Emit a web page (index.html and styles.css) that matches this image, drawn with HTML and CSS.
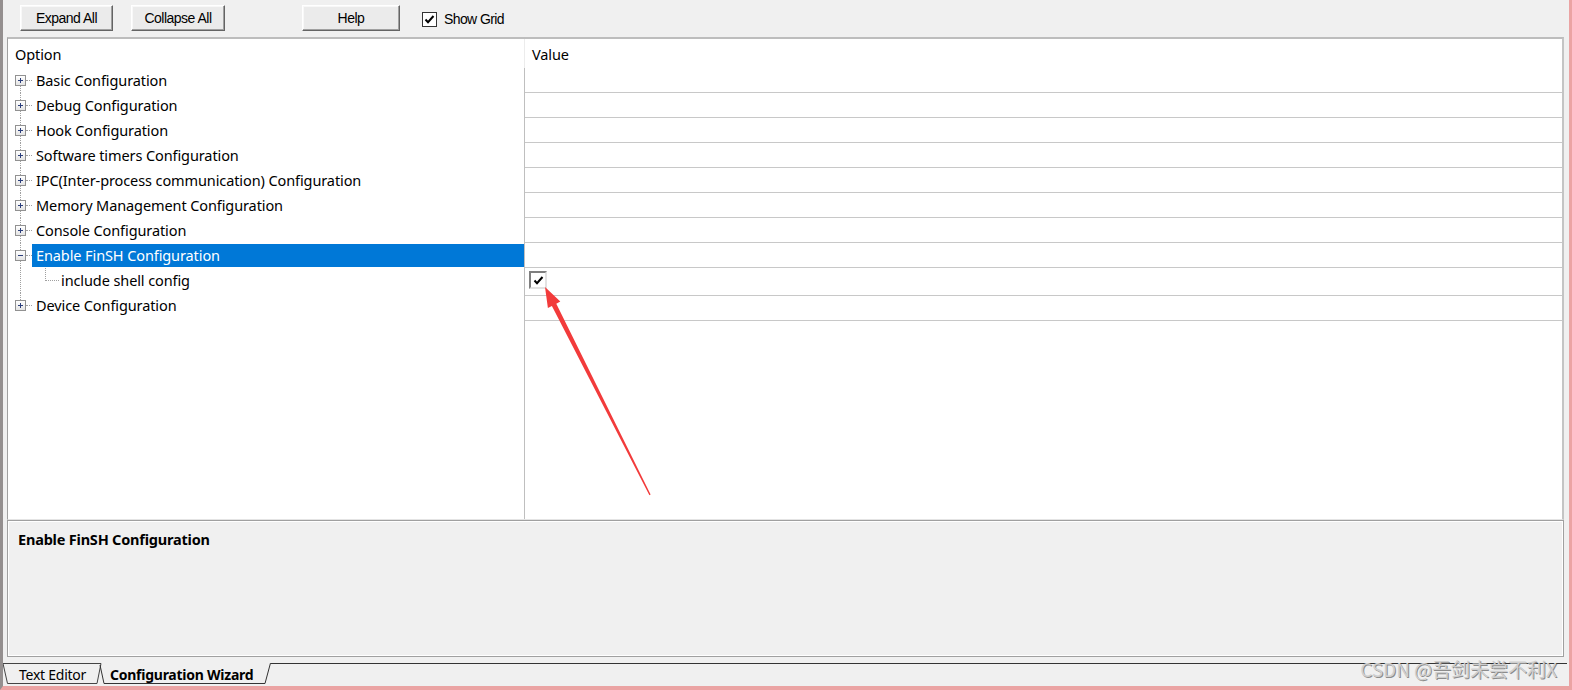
FILE: index.html
```html
<!DOCTYPE html>
<html lang="en">

<head>
    <meta charset="UTF-8">
    <meta name="viewport" content="width=device-width, initial-scale=1.0">
    <title>Configuration Wizard</title>
    <link rel="stylesheet" href="styles.css">
</head>

<body>
    <div class="window">
        <div class="toolbar">
            <button class="btn btn-expand">Expand All</button>
            <button class="btn btn-collapse">Collapse All</button>
            <button class="btn btn-help">Help</button>
            <label class="grid-toggle">
                <span class="tb-check">
                    <svg viewBox="0 0 13 13" width="13" height="13"><path d="M2.5 6.5 L5 9.2 L10.5 3" fill="none" stroke="#000" stroke-width="2"/></svg>
                </span>
                Show Grid
            </label>
        </div>

        <div class="grid">
            <div class="head head-option">Option</div>
            <div class="head head-value">Value</div>

            <ul class="tree">
                <li class="node"><span class="exp"></span><span class="dash"></span><span class="label">Basic Configuration</span></li>
                <li class="node"><span class="exp"></span><span class="dash"></span><span class="label">Debug Configuration</span></li>
                <li class="node"><span class="exp"></span><span class="dash"></span><span class="label">Hook Configuration</span></li>
                <li class="node"><span class="exp"></span><span class="dash"></span><span class="label">Software timers Configuration</span></li>
                <li class="node"><span class="exp"></span><span class="dash"></span><span class="label">IPC(Inter-process communication) Configuration</span></li>
                <li class="node"><span class="exp"></span><span class="dash"></span><span class="label">Memory Management Configuration</span></li>
                <li class="node"><span class="exp"></span><span class="dash"></span><span class="label">Console Configuration</span></li>
                <li class="node open selected"><span class="exp"></span><span class="dash"></span><span class="label">Enable FinSH Configuration</span></li>
                <li class="node child"><span class="elbow"></span><span class="label">include shell config</span></li>
                <li class="node"><span class="exp"></span><span class="dash"></span><span class="label">Device Configuration</span></li>
            </ul>

            <div class="values">
                <div class="cell"></div>
                <div class="cell"></div>
                <div class="cell"></div>
                <div class="cell"></div>
                <div class="cell"></div>
                <div class="cell"></div>
                <div class="cell"></div>
                <div class="cell"></div>
                <div class="cell">
                    <span class="vcheck">
                        <svg viewBox="0 0 13 13" width="13" height="13"><path d="M2.5 6.5 L5 9.2 L10.5 3" fill="none" stroke="#000" stroke-width="2"/></svg>
                    </span>
                </div>
                <div class="cell"></div>
            </div>
        </div>

        <div class="desc">Enable FinSH Configuration</div>

        <div class="tabs">
            <div class="tab tab-text">
                <svg width="98" height="21"><polyline points="0,0.5 4.5,20.5 94,20.5 98,0.5 0,0.5" fill="none" stroke="#444" stroke-width="1"/></svg>
                <span>Text Editor</span>
            </div>
            <div class="tab tab-wizard">
                <svg width="170" height="21"><polyline points="-1,2 3,20.5 164,20.5 169.5,0" fill="none" stroke="#333" stroke-width="1"/></svg>
                <span>Configuration Wizard</span>
            </div>
            <div class="tab-rest"></div>
        </div>

        <div class="watermark">CSDN @吾剑未尝不利X</div>

        <!-- 标注箭头 -->
        <svg class="annotation" width="1572" height="690">
            <polygon points="545,287 560.3,301.6 556.3,303.7 650.6,494.6 649.4,495.2 551.9,305.9 547.9,308" fill="#f23b3b"/>
        </svg>
    </div>
</body>

</html>
```

FILE: styles.css
```css
* {
    margin: 0;
    padding: 0;
    box-sizing: border-box;
}

body {
    background-color: #f0f0f0;
    font-family: "Noto Sans", "Open Sans", sans-serif;
    color: #000;
}

.window {
    position: relative;
    width: 1572px;
    height: 690px;
    border-left: 3px solid #948f8f;
    border-right: 3px solid #eba3a3;
    border-bottom: 4px solid #eba3a3;
    display: flex;
    flex-direction: column;
    overflow: hidden;
}

/* 工具栏 */
.toolbar {
    height: 37px;
    flex: none;
    display: flex;
    align-items: flex-start;
    padding: 5px 0 0 17px;
}

.btn {
    height: 26px;
    font-family: "Liberation Sans", Arial, sans-serif;
    font-size: 14px;
    letter-spacing: -0.5px;
    color: #000;
    background-color: #ebebeb;
    border: 1px solid;
    border-color: #fff #646464 #646464 #fff;
    box-shadow: inset -1px -1px 0 #a0a0a0, inset 1px 1px 0 #f8f8f8;
}

.btn-expand {
    width: 93px;
}

.btn-collapse {
    width: 94px;
    margin-left: 18px;
}

.btn-help {
    width: 98px;
    margin-left: 77px;
}

.grid-toggle {
    display: flex;
    align-items: center;
    margin: 6px 0 0 22px;
    font-family: "Liberation Sans", Arial, sans-serif;
    font-size: 14px;
    letter-spacing: -0.6px;
}

.tb-check {
    width: 15px;
    height: 15px;
    margin-right: 7px;
    border: 1px solid #333;
    background-color: #fff;
    display: flex;
    align-items: center;
    justify-content: center;
}

/* 选项表格 */
.grid {
    height: 483px;
    flex: none;
    margin: 0 5px 0 4px;
    background-color: #fff;
    border-top: 2px solid #bdbdbd;
    border-left: 1px solid #a0a0a0;
    border-right: 2px solid #c4c4c4;
    border-bottom: 1px solid #e4e4e4;
    display: grid;
    grid-template-columns: 516px 1fr;
    grid-template-rows: 29px 1fr;
}

.head {
    display: flex;
    align-items: center;
    font-size: 14.5px;
    letter-spacing: -0.1px;
}

.head-option {
    padding-left: 7px;
}

.head-value {
    padding-left: 7px;
    border-left: 1px solid #ececec;
}

.tree {
    list-style: none;
}

.node {
    position: relative;
    height: 25px;
    display: flex;
    align-items: center;
    padding-left: 7px;
}

.node::before {
    content: '';
    position: absolute;
    left: 12px;
    top: 0;
    bottom: 0;
    border-left: 1px dotted #a0a0a0;
}

.node:first-child::before {
    top: 12px;
}

.node:last-child::before {
    bottom: 12px;
}

.exp {
    position: relative;
    z-index: 1;
    flex: none;
    width: 11px;
    height: 11px;
    border: 1px solid #919191;
    background: linear-gradient(#fff, #e4e4e4);
}

.exp::before {
    content: '';
    position: absolute;
    left: 2px;
    top: 4px;
    width: 5px;
    height: 1px;
    background-color: #2c3f7c;
}

.exp::after {
    content: '';
    position: absolute;
    left: 4px;
    top: 2px;
    width: 1px;
    height: 5px;
    background-color: #2c3f7c;
}

.node.open .exp::after {
    display: none;
}

.dash {
    flex: none;
    width: 6px;
    border-top: 1px dotted #a0a0a0;
}

.label {
    flex: 1;
    height: 23px;
    display: flex;
    align-items: center;
    padding: 0 4px 2px;
    font-size: 14.5px;
    letter-spacing: -0.1px;
    white-space: nowrap;
}

.node.selected .label {
    background-color: #0078d7;
    color: #fff;
}

.node.child {
    padding-left: 0;
}

.elbow {
    flex: none;
    align-self: flex-start;
    width: 14px;
    height: 13px;
    margin-left: 37px;
    border-left: 1px dotted #a0a0a0;
    border-bottom: 1px dotted #a0a0a0;
}

.node.child .label {
    padding-left: 2px;
}

.values {
    border-left: 1px solid #bfbfbf;
}

.cell {
    height: 25px;
    border-bottom: 1px solid #c8c8c8;
}

.vcheck {
    width: 18px;
    height: 18px;
    margin: 3px 0 0 4px;
    border: 2px solid;
    border-color: #7f7f7f #e2e2e2 #e2e2e2 #7f7f7f;
    background-color: #fff;
    display: flex;
    align-items: center;
    justify-content: center;
}

/* 说明区域 */
.desc {
    height: 137px;
    flex: none;
    margin: 0 5px 0 4px;
    border: 1px solid #a0a0a0;
    box-shadow: inset -1px -1px 0 #fff, inset 1px 1px 0 #fff;
    padding: 9px 10px;
    font-size: 14.5px;
    font-weight: bold;
    line-height: 18px;
    letter-spacing: -0.2px;
}

/* 底部标签 */
.tabs {
    height: 29px;
    flex: none;
    padding-top: 6px;
    display: flex;
    align-items: flex-start;
}

.tab {
    position: relative;
    height: 21px;
    display: flex;
    align-items: center;
    padding-top: 2px;
    font-size: 14px;
    letter-spacing: -0.25px;
}

.tab svg {
    position: absolute;
    left: 0;
    top: 0;
    overflow: visible;
}

.tab-text {
    width: 98px;
    padding-left: 16px;
}

.tab-wizard {
    width: 170px;
    padding-left: 9px;
    font-weight: bold;
}

.tab-rest {
    flex: 1;
    margin-right: 2px;
    border-top: 1px solid #333;
}

.watermark {
    position: absolute;
    right: 12px;
    bottom: 7px;
    font-family: "Noto Sans CJK SC", sans-serif;
    font-size: 19px;
    line-height: 21px;
    color: #cfcfcf;
    text-shadow: 1px 1px 0 #8c8c8c;
}

.annotation {
    position: absolute;
    left: -3px;
    top: 0;
    pointer-events: none;
}
```
